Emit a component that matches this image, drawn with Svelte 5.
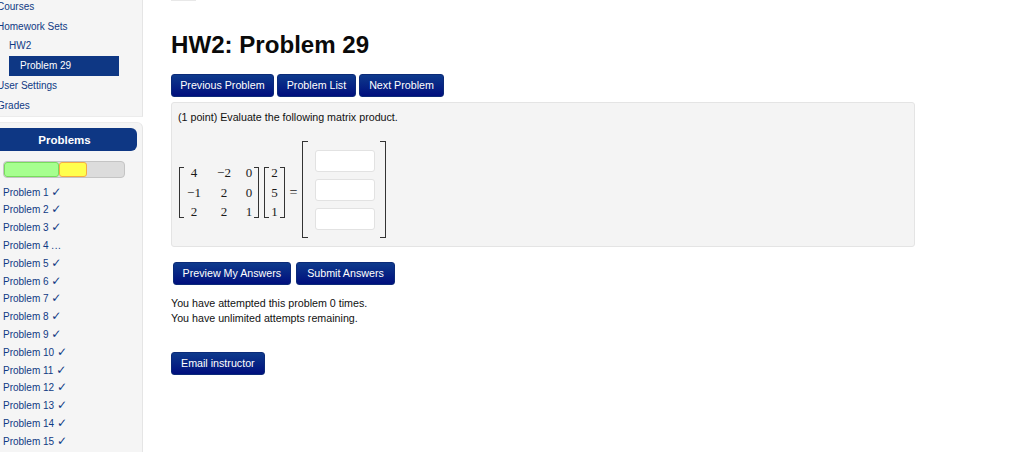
<script>
  const marks = ['✓','✓','✓','...','✓','✓','✓','✓','✓','✓','✓','✓','✓','✓','✓'];
  const m1 = [['4','−2','0'],['−1','2','0'],['2','2','1']];
  const m2 = ['2','5','1'];
</script>

<div class="page">
  <aside class="side">
    <nav class="panel top">
      <a class="lvl0" href="#c">Courses</a>
      <a class="lvl0" href="#h">Homework Sets</a>
      <a class="lvl1" href="#w">HW2</a>
      <a class="lvl1 active" href="#p">Problem 29</a>
      <a class="lvl0" href="#u">User Settings</a>
      <a class="lvl0" href="#g">Grades</a>
    </nav>
    <div class="panel probs">
      <h2>Problems</h2>
      <div class="progress">
        <span class="green"></span><span class="yellow"></span>
      </div>
      <ul>
        {#each marks as mk, i}
          <li><a href="#n">Problem {i + 1} <span class={mk === '✓' ? 'mk' : 'dots'}>{mk}</span></a></li>
        {/each}
      </ul>
    </div>
  </aside>

  <main>
    <div class="stub"></div>
    <h1>HW2: Problem 29</h1>
    <div class="btns nav-btns">
      <button>Previous Problem</button>
      <button>Problem List</button>
      <button>Next Problem</button>
    </div>
    <section class="problem">
      <p>(1 point) Evaluate the following matrix product.</p>
      <div class="math">
        <div class="bracket m3">
          {#each m1 as row}{#each row as c}<span>{c}</span>{/each}{/each}
        </div>
        <div class="bracket m1">
          {#each m2 as c}<span>{c}</span>{/each}
        </div>
        <span class="eq">=</span>
        <div class="bracket big">
          <input aria-label="a" /><input aria-label="b" /><input aria-label="c" />
        </div>
      </div>
    </section>
    <div class="btns sub-btns">
      <button>Preview My Answers</button>
      <button>Submit Answers</button>
    </div>
    <p class="att">You have attempted this problem 0 times.<br />You have unlimited attempts remaining.</p>
    <button class="email">Email instructor</button>
  </main>
</div>

<style>
  :global(body) { margin: 0; background: #fff; }
  .page {
    display: flex;
    width: 1024px;
    height: 452px;
    overflow: hidden;
    font-family: "Liberation Sans", Arial, sans-serif;
    font-size: 10.7px;
    color: #111;
  }
  .side { width: 143px; flex: none; display: flex; flex-direction: column; gap: 5px; }
  .panel { background: #f5f5f5; border-right: 1px solid #e5e5e5; box-sizing: border-box; }
  .top {
    height: 117px;
    display: flex;
    flex-direction: column;
    border-bottom: 1px solid #ececec;
  }
  .top a {
    display: block;
    flex: none;
    height: 19.8px;
    line-height: 19.8px;
    font-size: 10px;
    text-decoration: none;
    color: #103a84;
    box-sizing: border-box;
  }
  .top a:first-child { margin-top: -3.2px; }
  .lvl0 { margin-left: -3px; }
  .lvl1 { margin-left: 9px; }
  .top a.active {
    width: 110px;
    padding-left: 11px;
    background: #0e3784;
    color: #fff;
  }
  .probs {
    flex: 1;
    border-top: 1px solid #ececec;
    border-top-right-radius: 6px;
    padding-top: 5px;
  }
  h2 {
    margin: 0 5px 0 -8px;
    height: 23px;
    line-height: 25px;
    text-align: center;
    background: #0e3784;
    color: #fff;
    font-size: 11.5px;
    font-weight: 700;
    border-radius: 6px;
  }
  .progress {
    display: flex;
    margin: 10px 0 0 3px;
    width: 122px;
    height: 17px;
    background: #dcdcdc;
    border: 1px solid #c4c4c4;
    border-radius: 4px;
    box-sizing: border-box;
    overflow: hidden;
  }
  .green { width: 55px; background: #a6ff8f; border: 1px solid #77dd5c; box-sizing: border-box; border-radius: 3px; }
  .yellow { width: 28px; background: #ffff4d; border: 1px solid #f5ab45; box-sizing: border-box; border-radius: 3px; }
  ul { list-style: none; margin: 8px 0 0; padding: 0 0 0 3px; }
  li { height: 17.8px; line-height: 13px; white-space: nowrap; }
  li a { color: #103a84; text-decoration: none; font-size: 10px; }
  .mk { font-family: "DejaVu Sans", sans-serif; font-size: 12px; line-height: 0; }
  .dots { letter-spacing: 0.6px; }
  main {
    width: 744px;
    margin-left: 28px;
    display: flex;
    flex-direction: column;
    align-items: flex-start;
  }
  .stub { width: 25px; height: 1px; background: #e8e8e8; }
  h1 { margin: 30px 0 0; font-size: 24.1px; line-height: 28px; font-weight: 700; color: #0a0a0a; }
  .btns { display: flex; gap: 3px; }
  .nav-btns { margin-top: 15px; }
  .nav-btns button:first-child { padding: 0 8.2px; }
  button {
    height: 23px;
    padding: 0 9px;
    border: 1px solid #0b2a78;
    border-radius: 3px;
    background: linear-gradient(#0e3a8c, #000f7d);
    color: #fff;
    font: 10.7px "Liberation Sans", Arial, sans-serif;
    line-height: 21px;
    white-space: nowrap;
  }
  .problem {
    align-self: stretch;
    margin-top: 5px;
    height: 145px;
    box-sizing: border-box;
    background: #f4f4f4;
    border: 1px solid #e4e4e4;
    border-radius: 3px;
    padding: 8px 6px 0;
  }
  .problem p { margin: 0; font-size: 10.7px; line-height: 13px; }
  .math {
    display: flex;
    align-items: center;
    margin-top: 17px;
    height: 97px;
    font-family: "Liberation Serif", "Times New Roman", serif;
    font-size: 13px;
    color: #1a1a1a;
    padding-left: 1px;
  }
  .bracket { position: relative; box-sizing: border-box; }
  .bracket::before, .bracket::after {
    content: "";
    position: absolute;
    top: 0;
    bottom: 0;
    width: 4px;
    border: 1px solid #333;
  }
  .bracket::before { left: 0; border-right: 0; }
  .bracket::after { right: 0; border-left: 0; }
  .m3 {
    display: grid;
    grid-template-columns: 30px 30px 20px;
    grid-auto-rows: 19.5px;
    align-content: center;
    width: 80px;
    height: 51px;
    margin-top: 6px;
    text-align: center;
    line-height: 19.5px;
  }
  .m1 {
    display: grid;
    grid-auto-rows: 19.5px;
    align-content: center;
    width: 21px;
    height: 51px;
    margin: 6px 0 0 5px;
    text-align: center;
    line-height: 19.5px;
  }
  .eq { width: 17px; margin-top: 6px; text-align: center; font-size: 14px; }
  .big {
    width: 84px;
    height: 97px;
    display: flex;
    flex-direction: column;
    align-items: center;
    gap: 7px;
    padding: 9px 0 0 2px;
  }
  .big::before, .big::after { width: 5px; border-width: 1.3px; }
  .big::before { border-right: 0; }
  .big::after { border-left: 0; }
  input {
    width: 60px;
    height: 22px;
    box-sizing: border-box;
    border: 1px solid #e2e2e2;
    border-radius: 3px;
    background: #fff;
    margin: 0;
    padding: 0;
  }
  .sub-btns { margin: 15px 0 0 2px; gap: 5px; }
  .sub-btns button:first-child { padding: 0 8.6px; }
  .sub-btns button:last-child { padding: 0 10.4px; }
  .att { margin: 11px 0 0; font-size: 10.7px; line-height: 15px; }
  .email { margin-top: 26px; }
</style>
